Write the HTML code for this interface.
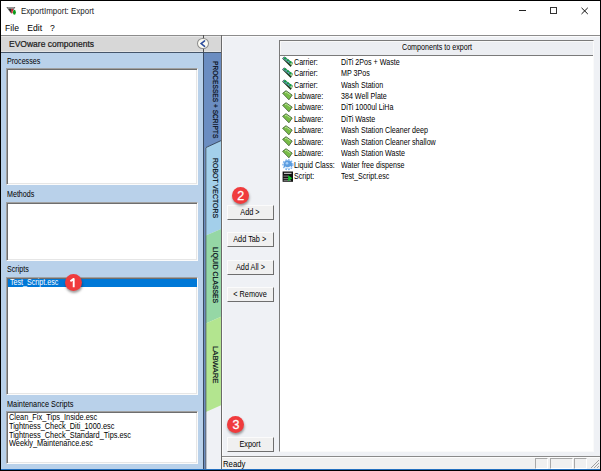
<!DOCTYPE html>
<html><head><meta charset="utf-8">
<style>
*{box-sizing:border-box;margin:0;padding:0}
html,body{width:601px;height:471px;overflow:hidden;background:#000}
body{position:relative;font-family:"Liberation Sans",sans-serif;color:#000}
.a{position:absolute}
.t{position:absolute;white-space:nowrap;line-height:10px;font-size:8px;transform-origin:0 0}
.ms{font-size:8.2px;transform:scaleX(0.87)}
.tabt{font-size:8px;color:#0a101c;-webkit-text-stroke:0.2px #0a101c}
.lb{background:#fff;border-left:1px solid #a0a0a0;border-top:1px solid #a0a0a0;border-right:1px solid #fbfbfb;border-bottom:1px solid #fbfbfb;box-shadow:inset 1px 1px 0 #6e6e6e,inset -1px -1px 0 #e6e6e6}
.btn span{display:inline-block;transform:scaleX(0.88)}
.btn{width:47px;height:15px;background:#f0f0f0;border-left:1px solid #fbfbfb;border-top:1px solid #fbfbfb;border-right:1px solid #6e6e6e;border-bottom:1px solid #6e6e6e;font-size:8.3px;text-align:center;line-height:13px;white-space:nowrap}
.sp{border-left:1px solid #a8a8a8;border-top:1px solid #a8a8a8;border-right:1px solid #fff;border-bottom:1px solid #fff}
.badge{width:17px;height:17px;border-radius:50%;background:#f03b3d;color:#fff;font-size:12.5px;line-height:19px;-webkit-text-stroke:0.3px #fff;text-align:center;box-shadow:0.5px 2px 2.5px rgba(0,0,0,0.38)}
</style></head><body>
<!-- window -->
<div class="a" style="left:1px;top:1px;width:599px;height:468px;background:#fff"></div>
<div class="a" style="left:1px;top:469px;width:599px;height:1px;background:#2470c0"></div>

<!-- title bar -->
<svg class="a" style="left:6px;top:6px" width="12" height="10" viewBox="0 0 12 10">
  <path d="M0.3 1 L9.3 1 L5.3 7.7 Z" fill="#5c5c5c"/>
  <path d="M1.5 1.6 L8.2 1.6 L7.6 2.6 L2.2 2.6 Z" fill="#cfcfcf"/>
  <path d="M2.4 2.7 L4.9 2.7 L5.3 6.8 Z" fill="#262626"/>
  <rect x="5.5" y="2.8" width="1.3" height="4.4" fill="#ee1422"/>
  <rect x="5.9" y="5.2" width="0.5" height="1.5" fill="#ffd6d6"/>
  <ellipse cx="8.4" cy="6.3" rx="1.45" ry="2.5" fill="#0a9a1a"/>
</svg>
<div class="t" style="left:21px;top:5.7px;font-size:8.3px;color:#1a1a1a;transform:scaleX(0.96)">ExportImport: Export</div>
<!-- window controls -->
<div class="a" style="left:519px;top:10px;width:7px;height:1px;background:#222"></div>
<div class="a" style="left:550px;top:7px;width:7px;height:7px;border:1px solid #333"></div>
<svg class="a" style="left:580px;top:6px" width="10" height="10" viewBox="0 0 10 10">
  <path d="M1.5 1.8 L7.8 8 M7.8 1.8 L1.5 8" stroke="#111" stroke-width="1"/>
</svg>

<!-- menu -->
<div class="t" style="left:5.1px;top:23.2px;font-size:8.6px">File</div>
<div class="t" style="left:27.3px;top:23.2px;font-size:8.6px">Edit</div>
<div class="t" style="left:49.9px;top:23.2px;font-size:8.6px">?</div>

<!-- separator -->
<div class="a" style="left:1px;top:35px;width:599px;height:1px;background:#8c8c8c"></div>

<!-- left header -->
<div class="a" style="left:1px;top:36px;width:221px;height:16px;background:#d7d7d7;border-top:1px solid #e6e6e6;border-bottom:1px solid #e4e4e4"></div>
<div class="t" style="left:9px;top:39px;font-size:8.5px;color:#1a1a1a;-webkit-text-stroke:0.2px #1a1a1a">EVOware components</div>
<div class="a" style="left:1px;top:52px;width:221px;height:1px;background:#45556a"></div>

<!-- left panel -->
<div class="a" style="left:1px;top:53px;width:202px;height:416px;background:#b9d1ea"></div>
<div class="a" style="left:203px;top:35px;width:1px;height:434px;background:#3a4a60"></div>

<!-- right panel -->
<div class="a" style="left:222px;top:36px;width:378px;height:433px;background:#eff1f5;border-left:1px solid #fbfbfc;border-top:1px solid #fbfbfc"></div>
<div class="a" style="left:221px;top:35px;width:1px;height:434px;background:#6a6a6a"></div>

<!-- tab strip -->
<div class="a" style="left:204px;top:53px;width:17px;height:416px;background:#eff1f5"></div>
<svg class="a" style="left:204px;top:53px" width="17" height="416" viewBox="0 0 17 416">
  <polygon points="0,0 17,0 17,88 0,95" fill="#6b8dc1"/>
  <rect x="0" y="90" width="1.3" height="326" fill="#6b8dc1"/>
  <polygon points="1.8,94.6 17,87.4 17,176 1.8,182.6" fill="#a3cfea"/>
  <polygon points="1.8,182.6 17,176 17,263.8 1.8,270.5" fill="#95d7a5"/>
  <polygon points="1.8,270.5 17,263.8 17,352.2 1.8,359" fill="#b3e58f"/>
  <path d="M1.8 416 L1.8 94.6 L17 87.6" fill="none" stroke="#2e3d55" stroke-width="0.9"/>
</svg>

<div class="t tabt" style="left:220.3px;top:60.6px;transform:rotate(90deg) scaleX(0.826)">PROCESSES + SCRIPTS</div>
<div class="t tabt" style="left:220.3px;top:158px;transform:rotate(90deg) scaleX(0.872)">ROBOT VECTORS</div>
<div class="t tabt" style="left:220.3px;top:246.7px;transform:rotate(90deg) scaleX(0.852)">LIQUID CLASSES</div>
<div class="t tabt" style="left:220.3px;top:346px;transform:rotate(90deg) scaleX(0.966)">LABWARE</div>
<!-- collapse button -->
<div class="a" style="left:203px;top:35px;width:1px;height:17px;background:#505050"></div>
<div class="a" style="left:197.4px;top:38.2px;width:11.4px;height:10.8px;border-radius:50%;background:#fbfaf3;border:1px solid #8c8c8c"></div>
<svg class="a" style="left:197px;top:38px" width="12" height="12" viewBox="0 0 12 12">
  <path d="M7.6 2.9 L4.1 5.6 L7.6 8.4" fill="none" stroke="#2b4b9c" stroke-width="1.5" stroke-linecap="round"/>
</svg>


<!-- left panel sections -->
<div class="t ms" style="left:7.3px;top:57px">Processes</div>
<div class="a lb" style="left:6px;top:68px;width:192px;height:117px"></div>
<div class="t ms" style="left:7.3px;top:190px">Methods</div>
<div class="a lb" style="left:6px;top:202px;width:192px;height:59px"></div>
<div class="t ms" style="left:7.3px;top:265px">Scripts</div>
<div class="a lb" style="left:6px;top:277px;width:192px;height:118px"></div>
<div class="a" style="left:8px;top:278.5px;width:188.5px;height:8px;background:#0078d7"></div>
<div class="t ms" style="left:9.5px;top:277.6px;color:#fff">Test_Script.esc</div>
<div class="t ms" style="left:7px;top:400.3px;transform:scaleX(0.895)">Maintenance Scripts</div>
<div class="a lb" style="left:6px;top:411px;width:192px;height:53px"></div>
<div class="t ms" style="left:8.6px;top:413.4px;transform:scaleX(0.9)">Clean_Fix_Tips_Inside.esc</div>
<div class="t ms" style="left:8.6px;top:422px;transform:scaleX(0.9)">Tightness_Check_Diti_1000.esc</div>
<div class="t ms" style="left:8.6px;top:430.6px;transform:scaleX(0.9)">Tightness_Check_Standard_Tips.esc</div>
<div class="t ms" style="left:8.6px;top:439.3px;transform:scaleX(0.9)">Weekly_Maintenance.esc</div>

<!-- right listview -->
<div class="a" style="left:279px;top:40px;width:315px;height:411.5px;border-left:1px solid #7a7a7a;border-top:1px solid #7a7a7a;border-right:1px solid #fafafa;border-bottom:1px solid #fafafa;background:#fff"></div>
<div class="a" style="left:280px;top:41px;width:313px;height:14px;background:#eceef2;border-top:1px solid #f8f8f8;border-left:1px solid #f8f8f8"></div>
<div class="a" style="left:280px;top:55px;width:313px;height:1px;background:#7a7a7a"></div>
<div class="t ms" style="left:402px;top:42.5px">Components to export</div>

<!-- buttons -->
<div class="a btn" style="left:226.5px;top:205px"><span>Add &gt;</span></div>
<div class="a btn" style="left:226.5px;top:232px"><span>Add Tab &gt;</span></div>
<div class="a btn" style="left:226.5px;top:259.5px"><span>Add All &gt;</span></div>
<div class="a btn" style="left:226.5px;top:286.5px"><span>&lt; Remove</span></div>
<div class="a btn" style="left:226.5px;top:437px"><span>Export</span></div>

<!-- status bar -->
<div class="a" style="left:222px;top:456px;width:378px;height:1px;background:#8a8a8a"></div>
<div class="a" style="left:222px;top:457px;width:378px;height:1px;background:#fcfcfc"></div>
<div class="a" style="left:222px;top:458px;width:378px;height:11px;background:#f0f0f0"></div>
<div class="t" style="left:223px;top:459.2px;font-size:9px;transform:scaleX(0.86)">Ready</div>
<div class="a sp" style="left:535px;top:458px;width:13px;height:11px"></div>
<div class="a sp" style="left:550px;top:458px;width:23px;height:11px"></div>
<div class="a sp" style="left:574px;top:458px;width:13px;height:11px"></div>
<svg class="a" style="left:588px;top:457px" width="12" height="12" viewBox="0 0 12 12">
 <path d="M11 3 L3 11 M11 6 L6 11 M11 9 L9 11" stroke="#a0a0a0" stroke-width="1"/>
</svg>


<!-- list items -->
<svg class="a" style="left:281.5px;top:56.00px" width="12" height="12" viewBox="0 0 12 12"><path d="M0.2 2.6 L2.2 0.5 L11 6.9 L8.7 11 Z" fill="#1c3818"/><path d="M2.2 0.7 L10.9 7 L9.3 9.1 L0.7 2.6 Z" fill="#6d9cc4"/><path d="M9.2 6.2 L10.9 7 L9.4 9.2 L8.2 8.3 Z" fill="#a6dc86"/><ellipse cx="3.2" cy="2.4" rx="1.3" ry="1.1" fill="#14a23c"/><ellipse cx="5.8" cy="4.3" rx="1.3" ry="1.1" fill="#14a23c"/><ellipse cx="8.3" cy="6.2" rx="1.3" ry="1.1" fill="#14a23c"/></svg>
<div class="t ms" style="left:294px;top:57.60px">Carrier:</div>
<div class="t ms" style="left:340.6px;top:57.60px">DiTi 2Pos + Waste</div>
<svg class="a" style="left:281.5px;top:67.46px" width="12" height="12" viewBox="0 0 12 12"><path d="M0.2 2.6 L2.2 0.5 L11 6.9 L8.7 11 Z" fill="#1c3818"/><path d="M2.2 0.7 L10.9 7 L9.3 9.1 L0.7 2.6 Z" fill="#6d9cc4"/><path d="M9.2 6.2 L10.9 7 L9.4 9.2 L8.2 8.3 Z" fill="#a6dc86"/><ellipse cx="3.2" cy="2.4" rx="1.3" ry="1.1" fill="#14a23c"/><ellipse cx="5.8" cy="4.3" rx="1.3" ry="1.1" fill="#14a23c"/><ellipse cx="8.3" cy="6.2" rx="1.3" ry="1.1" fill="#14a23c"/></svg>
<div class="t ms" style="left:294px;top:69.06px">Carrier:</div>
<div class="t ms" style="left:340.6px;top:69.06px">MP 3Pos</div>
<svg class="a" style="left:281.5px;top:78.92px" width="12" height="12" viewBox="0 0 12 12"><path d="M0.2 2.6 L2.2 0.5 L11 6.9 L8.7 11 Z" fill="#1c3818"/><path d="M2.2 0.7 L10.9 7 L9.3 9.1 L0.7 2.6 Z" fill="#6d9cc4"/><path d="M9.2 6.2 L10.9 7 L9.4 9.2 L8.2 8.3 Z" fill="#a6dc86"/><ellipse cx="3.2" cy="2.4" rx="1.3" ry="1.1" fill="#14a23c"/><ellipse cx="5.8" cy="4.3" rx="1.3" ry="1.1" fill="#14a23c"/><ellipse cx="8.3" cy="6.2" rx="1.3" ry="1.1" fill="#14a23c"/></svg>
<div class="t ms" style="left:294px;top:80.52px">Carrier:</div>
<div class="t ms" style="left:340.6px;top:80.52px">Wash Station</div>
<svg class="a" style="left:281.5px;top:90.38px" width="12" height="12" viewBox="0 0 12 12"><path d="M0.6 3.3 L4 0.7 L10.2 5.1 L6.9 9.8 Z" fill="#78bc48" stroke="#3c5a30" stroke-width="0.8" stroke-linejoin="round"/><path d="M3 3 L4.2 2 L8.5 5" fill="none" stroke="#c0e4a0" stroke-width="1"/></svg>
<div class="t ms" style="left:294px;top:91.98px">Labware:</div>
<div class="t ms" style="left:340.6px;top:91.98px">384 Well Plate</div>
<svg class="a" style="left:281.5px;top:101.84px" width="12" height="12" viewBox="0 0 12 12"><path d="M0.6 3.3 L4 0.7 L10.2 5.1 L6.9 9.8 Z" fill="#78bc48" stroke="#3c5a30" stroke-width="0.8" stroke-linejoin="round"/><path d="M3 3 L4.2 2 L8.5 5" fill="none" stroke="#c0e4a0" stroke-width="1"/></svg>
<div class="t ms" style="left:294px;top:103.44px">Labware:</div>
<div class="t ms" style="left:340.6px;top:103.44px">DiTi 1000ul LiHa</div>
<svg class="a" style="left:281.5px;top:113.30px" width="12" height="12" viewBox="0 0 12 12"><path d="M0.6 3.3 L4 0.7 L10.2 5.1 L6.9 9.8 Z" fill="#78bc48" stroke="#3c5a30" stroke-width="0.8" stroke-linejoin="round"/><path d="M3 3 L4.2 2 L8.5 5" fill="none" stroke="#c0e4a0" stroke-width="1"/></svg>
<div class="t ms" style="left:294px;top:114.90px">Labware:</div>
<div class="t ms" style="left:340.6px;top:114.90px">DiTi Waste</div>
<svg class="a" style="left:281.5px;top:124.76px" width="12" height="12" viewBox="0 0 12 12"><path d="M0.6 3.3 L4 0.7 L10.2 5.1 L6.9 9.8 Z" fill="#78bc48" stroke="#3c5a30" stroke-width="0.8" stroke-linejoin="round"/><path d="M3 3 L4.2 2 L8.5 5" fill="none" stroke="#c0e4a0" stroke-width="1"/></svg>
<div class="t ms" style="left:294px;top:126.36px">Labware:</div>
<div class="t ms" style="left:340.6px;top:126.36px">Wash Station Cleaner deep</div>
<svg class="a" style="left:281.5px;top:136.22px" width="12" height="12" viewBox="0 0 12 12"><path d="M0.6 3.3 L4 0.7 L10.2 5.1 L6.9 9.8 Z" fill="#78bc48" stroke="#3c5a30" stroke-width="0.8" stroke-linejoin="round"/><path d="M3 3 L4.2 2 L8.5 5" fill="none" stroke="#c0e4a0" stroke-width="1"/></svg>
<div class="t ms" style="left:294px;top:137.82px">Labware:</div>
<div class="t ms" style="left:340.6px;top:137.82px">Wash Station Cleaner shallow</div>
<svg class="a" style="left:281.5px;top:147.68px" width="12" height="12" viewBox="0 0 12 12"><path d="M0.6 3.3 L4 0.7 L10.2 5.1 L6.9 9.8 Z" fill="#78bc48" stroke="#3c5a30" stroke-width="0.8" stroke-linejoin="round"/><path d="M3 3 L4.2 2 L8.5 5" fill="none" stroke="#c0e4a0" stroke-width="1"/></svg>
<div class="t ms" style="left:294px;top:149.28px">Labware:</div>
<div class="t ms" style="left:340.6px;top:149.28px">Wash Station Waste</div>
<svg class="a" style="left:281.5px;top:159.14px" width="12" height="12" viewBox="0 0 12 12"><circle cx="5.9" cy="5.7" r="4.4" fill="#5c9de0"/><circle cx="5.9" cy="5.7" r="5" fill="none" stroke="#78b0ec" stroke-width="1.2" stroke-dasharray="1.6 1.3"/><path d="M3 8 Q6 10.2 9 7.6" fill="none" stroke="#f0f8ff" stroke-width="1.4"/><circle cx="5" cy="4.2" r="1.3" fill="#a8d0f8"/></svg>
<div class="t ms" style="left:294px;top:160.74px">Liquid Class:</div>
<div class="t ms" style="left:340.6px;top:160.74px">Water free dispense</div>
<svg class="a" style="left:281.5px;top:170.60px" width="12" height="12" viewBox="0 0 12 12"><rect x="0.6" y="0.5" width="10.4" height="10.3" fill="#111"/><rect x="2" y="1.8" width="7.5" height="1.1" fill="#d0d0d0"/><rect x="1.5" y="4.6" width="5" height="1" fill="#8a8a8a"/><rect x="1.5" y="7.2" width="5" height="1" fill="#8a8a8a"/><rect x="1.6" y="9.3" width="7.5" height="0.8" fill="#9a9a9a"/><path d="M6.2 4.2 L10.2 7.2 L6.2 10.2 Z" fill="#12c82a"/></svg>
<div class="t ms" style="left:294px;top:172.20px">Script:</div>
<div class="t ms" style="left:341.3px;top:172.20px">Test_Script.esc</div>
<!-- badges -->
<div class="a badge" style="left:65.1px;top:274.3px"><svg class="a" style="left:0;top:0" width="17" height="17" viewBox="0 0 17 17"><path d="M8.7 13.3 L8.7 4.9 L5.4 7.2" fill="none" stroke="#fff" stroke-width="1.9" stroke-linejoin="round"/></svg></div>
<div class="a badge" style="left:232.3px;top:186.8px">2</div>
<div class="a badge" style="left:227.4px;top:415.6px">3</div>
</body></html>
